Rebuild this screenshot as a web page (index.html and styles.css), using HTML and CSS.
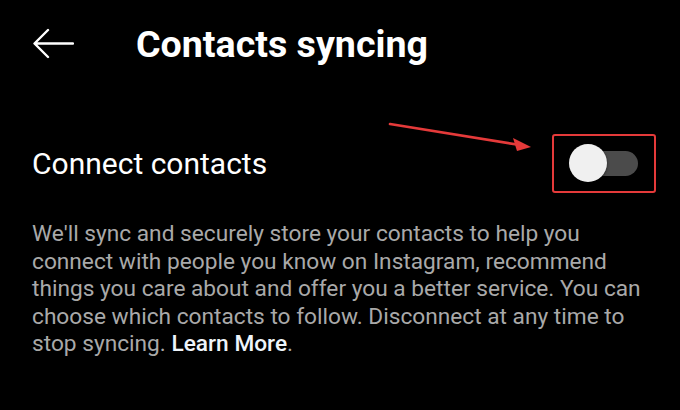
FILE: index.html
```
<!DOCTYPE html>
<html>
<head>
<meta charset="utf-8">
<link rel="stylesheet" href="styles.css">
</head>
<body>
<div class="screen">
  <header class="header">
    <svg class="back" width="42" height="32" viewBox="0 0 42 32">
      <path d="M41 15.5H3M16 2L2.5 15.5L16 29" fill="none" stroke="#fff" stroke-width="2.4" stroke-linecap="round" stroke-linejoin="round"/>
    </svg>
    <h1 class="title">Contacts syncing</h1>
  </header>
  <div class="row">
    <span class="label">Connect contacts</span>
    <div class="toggle-box">
      <div class="toggle"><div class="track"></div><div class="thumb"></div></div>
    </div>
    <svg class="pointer" width="146" height="30" viewBox="0 0 146 30">
      <line x1="2" y1="3" x2="132" y2="24" stroke="#e53a3a" stroke-width="2.6" stroke-linecap="round"/>
      <path d="M143 26L125 17L129 30Z" fill="#e53a3a"/>
    </svg>
  </div>
  <p class="desc">We'll sync and securely store your contacts to help you connect with people you know on Instagram, recommend things you care about and offer you a better service. You can choose which contacts to follow. Disconnect at any time to stop syncing. <a class="link">Learn More</a>.</p>
</div>
</body>
</html>
```
FILE: styles.css
```
html, body {
  margin: 0;
  padding: 0;
  background: #000;
}
.screen {
  width: 680px;
  height: 410px;
  background: #000;
  font-family: Roboto, "Noto Sans", sans-serif;
  color: #fff;
  overflow: hidden;
}
.header {
  display: flex;
  align-items: center;
  height: 88px;
  padding-left: 32px;
}
.back {
  display: block;
  width: 42px;
  height: 32px;
}
.title {
  margin: 0 0 0 62px;
  font-size: 37.6px;
  font-weight: 700;
  letter-spacing: 0;
}
.row {
  position: relative;
  display: flex;
  align-items: center;
  justify-content: space-between;
  height: 60px;
  margin-top: 45px;
  padding: 0 24px 0 32px;
}
.label {
  font-size: 30px;
  font-weight: 400;
}
.toggle-box {
  width: 100px;
  height: 55px;
  border: 2px solid #e53a3a;
  border-radius: 3px;
  display: flex;
  align-items: center;
  justify-content: center;
}
.toggle {
  position: relative;
  width: 70px;
  height: 38px;
  display: flex;
  align-items: center;
}
.track {
  width: 69px;
  height: 25px;
  border-radius: 13px;
  background: #4b4b4b;
}
.thumb {
  position: absolute;
  left: 0;
  top: 0;
  width: 38px;
  height: 38px;
  border-radius: 50%;
  background: #f0f0f0;
  box-shadow: 0 1px 3px rgba(0,0,0,0.5);
}
.pointer {
  position: absolute;
  left: 388px;
  top: -12px;
}
.desc {
  margin: 27px 0 0;
  padding: 0 32px;
  font-size: 22.7px;
  line-height: 27.5px;
  color: #a9a9a9;
}
.link {
  color: #eef4fa;
  font-weight: 500;
}
```
